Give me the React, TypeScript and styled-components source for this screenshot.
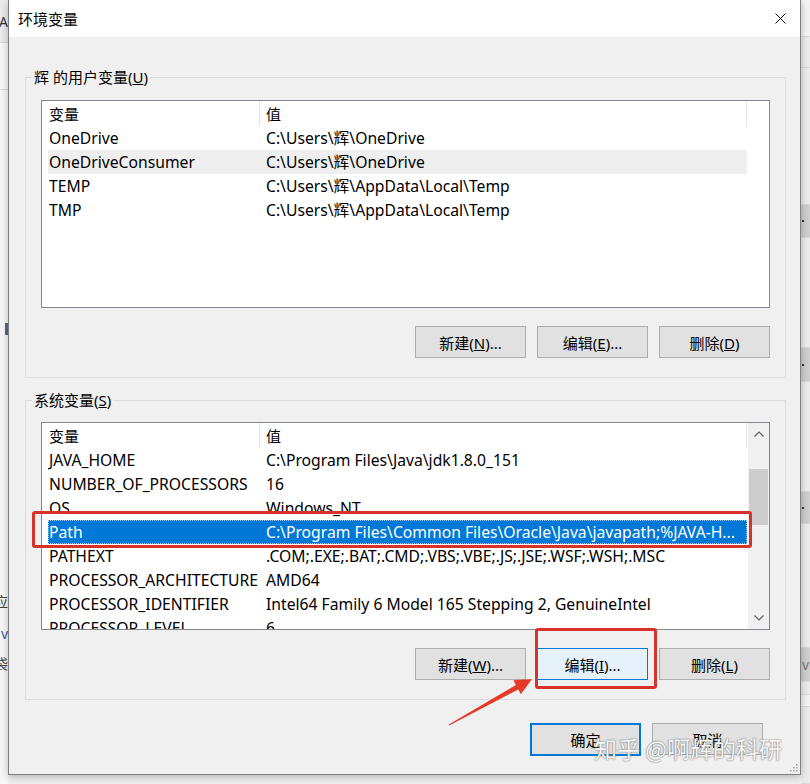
import styled, { createGlobalStyle } from "styled-components";

const GlobalStyle = createGlobalStyle`
  html, body {
    margin: 0;
    padding: 0;
  }
  body {
    font-family: "Noto Sans", "Noto Sans CJK SC", sans-serif;
    background: #f0f0f0;
    color: #000;
  }
`;

type Variable = { name: string; value: string; state?: "hover" | "selected" };

const userVars: Variable[] = [
  { name: "OneDrive", value: "C:\\Users\\辉\\OneDrive" },
  { name: "OneDriveConsumer", value: "C:\\Users\\辉\\OneDrive", state: "hover" },
  { name: "TEMP", value: "C:\\Users\\辉\\AppData\\Local\\Temp" },
  { name: "TMP", value: "C:\\Users\\辉\\AppData\\Local\\Temp" },
];

const systemVars: Variable[] = [
  { name: "JAVA_HOME", value: "C:\\Program Files\\Java\\jdk1.8.0_151" },
  { name: "NUMBER_OF_PROCESSORS", value: "16" },
  { name: "OS", value: "Windows_NT" },
  {
    name: "Path",
    value: "C:\\Program Files\\Common Files\\Oracle\\Java\\javapath;%JAVA-H...",
    state: "selected",
  },
  { name: "PATHEXT", value: ".COM;.EXE;.BAT;.CMD;.VBS;.VBE;.JS;.JSE;.WSF;.WSH;.MSC" },
  { name: "PROCESSOR_ARCHITECTURE", value: "AMD64" },
  { name: "PROCESSOR_IDENTIFIER", value: "Intel64 Family 6 Model 165 Stepping 2, GenuineIntel" },
  { name: "PROCESSOR_LEVEL", value: "6" },
];

// background window strip on the right, top to bottom
const bands: { h: number; tone: "light" | "mid" | "dark"; dot?: boolean; label?: string }[] = [
  { h: 37, tone: "light" },
  { h: 31, tone: "mid" },
  { h: 137, tone: "mid" },
  { h: 33, tone: "dark", dot: true },
  { h: 110, tone: "mid" },
  { h: 34, tone: "dark", dot: true },
  { h: 110, tone: "mid" },
  { h: 32, tone: "dark", dot: true },
  { h: 124, tone: "mid" },
  { h: 34, tone: "dark", label: "v" },
  { h: 13, tone: "mid" },
  { h: 12, tone: "light" },
  { h: 77, tone: "mid" },
];

function VarList({ items, scroll }: { items: Variable[]; scroll?: boolean }) {
  return (
    <ListBox>
      <ListContent>
        <HeaderRow>
          <HeaderCell $w={218} $pad={7}>变量</HeaderCell>
          <HeaderCell $w={487} $pad={6}>值</HeaderCell>
        </HeaderRow>
        {items.map((v) => (
          <Row key={v.name} $state={v.state}>
            <NameCell>{v.name}</NameCell>
            <ValueCell>{v.value}</ValueCell>
          </Row>
        ))}
      </ListContent>
      {scroll && (
        <Scrollbar>
          <ArrowBox>
            <svg width="10" height="6" viewBox="0 0 10 6">
              <path d="M0.5 5.5 L5 1 L9.5 5.5" fill="none" stroke="#606060" strokeWidth="1.2" />
            </svg>
          </ArrowBox>
          <Track>
            <Thumb />
          </Track>
          <ArrowBox>
            <svg width="10" height="6" viewBox="0 0 10 6">
              <path d="M0.5 0.5 L5 5 L9.5 0.5" fill="none" stroke="#606060" strokeWidth="1.2" />
            </svg>
          </ArrowBox>
        </Scrollbar>
      )}
    </ListBox>
  );
}

export default function App() {
  return (
    <>
      <GlobalStyle />
      <Page>
        <LeftStrip>
          <LeftTop>
            <span>JA</span>
          </LeftTop>
          <LeftLine $top={46} />
          <LeftMark $top={233} />
          <LeftGlyph $top={258}>应</LeftGlyph>
          <LeftGlyph $top={14} $blue>v</LeftGlyph>
          <LeftGlyph $top={12}>袋</LeftGlyph>
        </LeftStrip>

        <Dialog>
          <TitleBar>
            <Title>环境变量</Title>
            <svg width="11" height="11" viewBox="0 0 11 11">
              <path d="M0.5 0.5 L10.5 10.5 M10.5 0.5 L0.5 10.5" stroke="#111" strokeWidth="1" />
            </svg>
          </TitleBar>

          <Body>
            <Group>
              <Legend>
                辉 的用户变量(<u>U</u>)
              </Legend>
              <GroupInner $padTop={13}>
                <VarList items={userVars} />
                <ButtonRow>
                  <Button>新建(<u>N</u>)...</Button>
                  <Button>编辑(<u>E</u>)...</Button>
                  <Button>删除(<u>D</u>)</Button>
                </ButtonRow>
              </GroupInner>
            </Group>

            <Group $top={12}>
              <Legend>
                系统变量(<u>S</u>)
              </Legend>
              <GroupInner $padTop={12}>
                <VarList items={systemVars} scroll />
                <ButtonRow>
                  <Button>新建(<u>W</u>)...</Button>
                  <Button $variant="hover">编辑(<u>I</u>)...</Button>
                  <Button>删除(<u>L</u>)</Button>
                </ButtonRow>
              </GroupInner>
            </Group>

            <Footer>
              <Button $variant="default">确定</Button>
              <Button>取消</Button>
            </Footer>
          </Body>

          <Grip width="10" height="10" viewBox="0 0 10 10">
            <rect x="8" y="2" width="1.5" height="1.5" fill="#a0a0a0" />
            <rect x="5" y="5" width="1.5" height="1.5" fill="#a0a0a0" />
            <rect x="8" y="5" width="1.5" height="1.5" fill="#a0a0a0" />
            <rect x="2" y="8" width="1.5" height="1.5" fill="#a0a0a0" />
            <rect x="5" y="8" width="1.5" height="1.5" fill="#a0a0a0" />
            <rect x="8" y="8" width="1.5" height="1.5" fill="#a0a0a0" />
          </Grip>
        </Dialog>

        <RightStrip>
          {bands.map((b, i) => (
            <Band key={i} $h={b.h} $tone={b.tone}>
              {b.dot && <Dot />}
              {b.label}
            </Band>
          ))}
        </RightStrip>

        <PathMark />
        <EditMark />
        <Arrow width="100" height="65" viewBox="0 0 100 65">
          <polygon
            points="8.8,54.6 75.9,15.0 73.3,10.2 92,9 80.9,24.2 78.3,19.4 9.2,55.4"
            fill="#e53a2a"
          />
        </Arrow>
        <Watermark>知乎 @啊辉的科研</Watermark>
      </Page>
    </>
  );
}

const Page = styled.div`
  position: relative;
  width: 810px;
  height: 784px;
  overflow: hidden;
  display: flex;
  align-items: flex-start;
  background: #f0f0f0;
`;

const LeftStrip = styled.div`
  width: 8px;
  height: 784px;
  flex-shrink: 0;
  display: flex;
  flex-direction: column;
  align-items: flex-end;
  overflow: hidden;
  background: #f8f8f8;
`;

const LeftTop = styled.div`
  width: 8px;
  height: 42px;
  flex-shrink: 0;
  display: flex;
  align-items: center;
  justify-content: flex-end;
  overflow: hidden;
  white-space: nowrap;
  background: #ebebeb;
  border-bottom: 1px solid #d6d6d6;
  font-size: 14px;
  color: #333;
`;

const LeftLine = styled.div<{ $top: number }>`
  width: 8px;
  height: 1px;
  flex-shrink: 0;
  margin-top: ${(p) => p.$top}px;
  background: #dadada;
`;

const LeftMark = styled.div<{ $top: number }>`
  width: 3px;
  height: 12px;
  flex-shrink: 0;
  margin-top: ${(p) => p.$top}px;
  background: #55698f;
`;

const LeftGlyph = styled.div<{ $top: number; $blue?: boolean }>`
  width: 8px;
  flex-shrink: 0;
  margin-top: ${(p) => p.$top}px;
  display: flex;
  justify-content: flex-end;
  overflow: hidden;
  font-size: 14px;
  line-height: 18px;
  color: ${(p) => (p.$blue ? "#3b5aa8" : "#444")};
`;

const Dialog = styled.div`
  position: relative;
  width: 793px;
  height: 775px;
  flex-shrink: 0;
  box-sizing: border-box;
  display: flex;
  flex-direction: column;
  background: #f0f0f0;
  border: 1px solid #7f7f7f;
  border-top: none;
  box-shadow: 0 2px 8px rgba(0, 0, 0, 0.25);
  z-index: 1;
`;

const TitleBar = styled.div`
  height: 37px;
  flex-shrink: 0;
  display: flex;
  align-items: center;
  justify-content: space-between;
  padding: 0 14px 1px 9px;
  box-sizing: border-box;
  background: #fff;
`;

const Title = styled.span`
  font-size: 15px;
  color: #000;
`;

const Body = styled.div`
  flex: 1;
  display: flex;
  flex-direction: column;
  padding: 30px 14px 0 16px;
`;

const Group = styled.fieldset<{ $top?: number }>`
  margin: ${(p) => p.$top ?? 0}px 0 0;
  padding: 0;
  min-width: 0;
  border: 1px solid #dcdcdc;
`;

const Legend = styled.legend`
  margin-left: 6px;
  padding: 0 2px;
  font-size: 15px;
  line-height: 20px;
  color: #000;
`;

const GroupInner = styled.div<{ $padTop: number }>`
  padding: ${(p) => p.$padTop}px 15px 19px;
`;

const ListBox = styled.div`
  height: 208px;
  box-sizing: border-box;
  display: flex;
  overflow: hidden;
  background: #fff;
  border: 1px solid #828790;
`;

const ListContent = styled.div`
  flex: 1;
  min-width: 0;
  overflow: hidden;
  font-size: 15.7px;
  white-space: nowrap;
`;

const HeaderRow = styled.div`
  display: flex;
  height: 25px;
  font-size: 15px;
`;

const HeaderCell = styled.div<{ $w: number; $pad: number }>`
  width: ${(p) => p.$w}px;
  flex-shrink: 0;
  box-sizing: border-box;
  display: flex;
  align-items: center;
  padding-left: ${(p) => p.$pad}px;
  padding-bottom: 1px;
  border-right: 1px solid #e5e5e5;
`;

const Row = styled.div<{ $state?: "hover" | "selected" }>`
  width: 699px;
  height: 24px;
  margin-left: 6px;
  padding-bottom: 1px;
  box-sizing: border-box;
  display: flex;
  align-items: center;
  background: ${(p) =>
    p.$state === "selected" ? "#0078d7" : p.$state === "hover" ? "#efefef" : "transparent"};
  color: ${(p) => (p.$state === "selected" ? "#fff" : "#000")};
  outline: ${(p) => (p.$state === "selected" ? "1px dotted #9ccaf0" : "none")};
  outline-offset: -1px;
`;

const NameCell = styled.div`
  width: 211px;
  flex-shrink: 0;
  padding-left: 1px;
  box-sizing: border-box;
  overflow: hidden;
`;

const ValueCell = styled.div`
  flex: 1;
  min-width: 0;
  padding-left: 7px;
  overflow: hidden;
`;

const Scrollbar = styled.div`
  width: 21px;
  flex-shrink: 0;
  display: flex;
  flex-direction: column;
  background: #f0f0f0;
`;

const ArrowBox = styled.div`
  height: 22px;
  flex-shrink: 0;
  display: flex;
  align-items: center;
  justify-content: center;
`;

const Track = styled.div`
  flex: 1;
  padding-top: 24px;
`;

const Thumb = styled.div`
  height: 56px;
  margin: 0 1px;
  background: #cdcdcd;
`;

const ButtonRow = styled.div`
  margin-top: 18px;
  display: flex;
  justify-content: flex-end;
  gap: 11px;
`;

const Button = styled.button<{ $variant?: "default" | "hover" }>`
  width: 111px;
  height: ${(p) => (p.$variant === "default" ? 33 : 32)}px;
  box-sizing: border-box;
  padding: 0;
  font-family: "Noto Sans", "Noto Sans CJK SC", sans-serif;
  font-size: 15px;
  color: #000;
  background: ${(p) => (p.$variant === "hover" ? "#e5f1fb" : "#e1e1e1")};
  border: ${(p) =>
    p.$variant === "default"
      ? "2px solid #0078d7"
      : p.$variant === "hover"
      ? "1px solid #0078d7"
      : "1px solid #adadad"};
  border-radius: 0;
`;

const Footer = styled.div`
  margin-top: 23px;
  padding-right: 23px;
  display: flex;
  justify-content: flex-end;
  gap: 11px;
`;

const Grip = styled.svg`
  position: absolute;
  right: 2px;
  bottom: 2px;
`;

const RightStrip = styled.div`
  flex: 1;
  height: 784px;
  display: flex;
  flex-direction: column;
`;

const Band = styled.div<{ $h: number; $tone: "light" | "mid" | "dark" }>`
  height: ${(p) => p.$h}px;
  flex-shrink: 0;
  box-sizing: border-box;
  display: flex;
  align-items: center;
  padding-left: 1px;
  overflow: hidden;
  font-size: 14px;
  color: #777;
  background: ${(p) =>
    p.$tone === "dark" ? "#cfcfcf" : p.$tone === "light" ? "#f4f4f4" : "#ececec"};
  border-bottom: 1px solid #dadada;
`;

const Dot = styled.span`
  width: 2px;
  height: 2px;
  background: #333;
`;

const PathMark = styled.div`
  position: absolute;
  left: 32px;
  top: 511px;
  width: 720px;
  height: 37px;
  box-sizing: border-box;
  border: 3px solid #d8332a;
  border-radius: 3px;
  z-index: 2;
`;

const EditMark = styled.div`
  position: absolute;
  left: 535px;
  top: 628px;
  width: 122px;
  height: 61px;
  box-sizing: border-box;
  border: 3px solid #d8332a;
  border-radius: 3px;
  z-index: 2;
`;

const Arrow = styled.svg`
  position: absolute;
  left: 440px;
  top: 670px;
  z-index: 2;
`;

const Watermark = styled.div`
  position: absolute;
  left: 594px;
  top: 733px;
  z-index: 3;
  font-family: "Noto Sans CJK SC", sans-serif;
  font-size: 23px;
  line-height: 30px;
  white-space: nowrap;
  color: rgba(255, 255, 255, 0.95);
  text-shadow: 0 0 1px #707070, 0 0 2px #8a8a8a;
`;
